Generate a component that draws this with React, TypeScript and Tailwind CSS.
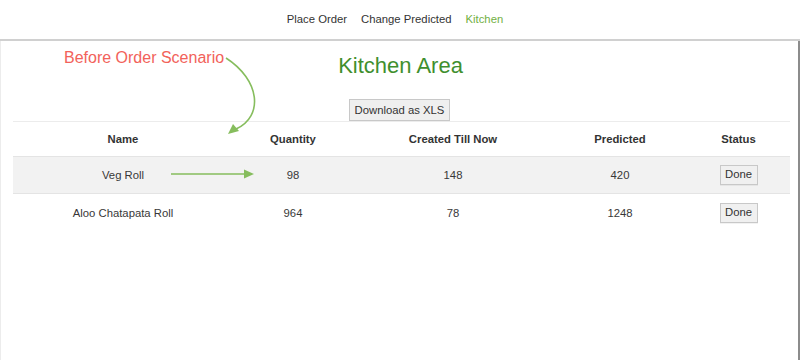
const rows = [
  { name: "Veg Roll", quantity: 98, created: 148, predicted: 420 },
  { name: "Aloo Chatapata Roll", quantity: 964, created: 78, predicted: 1248 },
];

const cols = "grid grid-cols-[220px_120px_200px_134px_103px] items-center";

const DoneButton = () => (
  <button
    type="button"
    className="h-[20px] w-[38px] border border-[#c8c8c8] bg-[#f0f0f0] text-[11.3px] leading-none text-[#333] shadow-[0_1px_0_rgba(0,0,0,0.05)]"
  >
    Done
  </button>
);

export default function App() {
  return (
    <div className="relative h-[360px] w-[800px] overflow-hidden bg-white font-['Liberation_Sans',Arial,sans-serif] text-[#383838]">
      <nav className="flex h-[41px] items-center justify-center gap-[14px] border-b-2 border-[#d0d0d0] pr-[10px] text-[11.3px] text-[#333]">
        <span>Place Order</span>
        <span>Change Predicted</span>
        <span className="text-[#72b043]">Kitchen</span>
      </nav>

      <div className="flex h-[319px] flex-col border-l border-l-[#ececec] border-r-2 border-r-[#8c8c8c]">
        <div className="relative flex justify-center pt-[14px] pl-[2px]">
          <span className="absolute left-[63px] top-[8px] text-[16px] leading-[18px] text-[#f2625a]">
            Before Order Scenario
          </span>
          <h1 className="text-[22px] leading-[22px] text-[#3f8f2e]">Kitchen Area</h1>
        </div>

        <div className="flex justify-center pt-[22px]">
          <button
            type="button"
            className="h-[22px] border border-[#c8c8c8] bg-[#efefef] px-[5px] text-[11.3px] text-[#333]"
          >
            Download as XLS
          </button>
        </div>

        <div className="ml-[12px] w-[777px] border-t border-[#ececec] text-[11.3px]">
          <div className={`${cols} h-[34px] font-bold text-[#333]`}>
            <div className="text-center">Name</div>
            <div className="text-center">Quantity</div>
            <div className="text-center">Created Till Now</div>
            <div className="text-center">Predicted</div>
            <div className="text-center">Status</div>
          </div>
          {rows.map((row, i) => (
            <div
              key={row.name}
              className={`${cols} h-[38px] ${i === 0 ? "border-y border-[#e4e4e4] bg-[#f2f2f2]" : ""}`}
            >
              <div className="text-center">{row.name}</div>
              <div className="text-center">{row.quantity}</div>
              <div className="text-center">{row.created}</div>
              <div className="text-center">{row.predicted}</div>
              <div className="flex justify-center">
                <DoneButton />
              </div>
            </div>
          ))}
        </div>
      </div>

      {/* annotation arrows */}
      <svg
        className="pointer-events-none absolute left-0 top-0"
        width="800"
        height="360"
        viewBox="0 0 800 360"
      >
        <path
          d="M226 58 C 260 80, 264 116, 236 129"
          fill="none"
          stroke="#86bd5d"
          strokeWidth="1.6"
        />
        <polygon points="228,134 233,124 239,131" fill="#86bd5d" />
        <line x1="171" y1="174" x2="246" y2="174" stroke="#86bd5d" strokeWidth="1.6" />
        <polygon points="244,169.5 254,174 244,178.5" fill="#86bd5d" />
      </svg>
    </div>
  );
}
